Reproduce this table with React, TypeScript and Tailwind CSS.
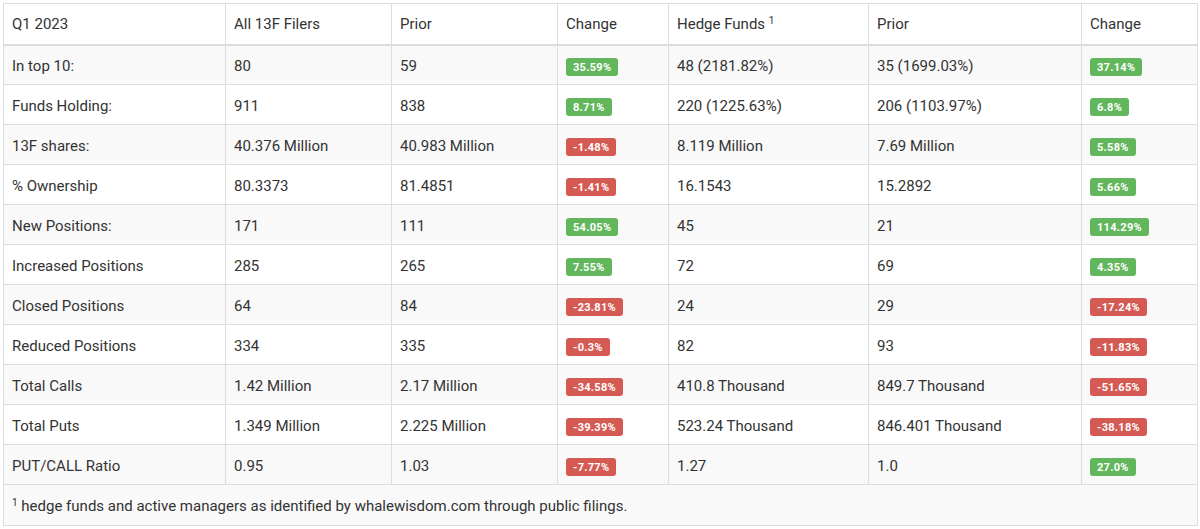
import React from "react";

type Row = { label: string; a: string; ap: string; ac: string; h: string; hp: string; hc: string };

const rows: Row[] = [
  { label: "In top 10:", a: "80", ap: "59", ac: "35.59%", h: "48 (2181.82%)", hp: "35 (1699.03%)", hc: "37.14%" },
  { label: "Funds Holding:", a: "911", ap: "838", ac: "8.71%", h: "220 (1225.63%)", hp: "206 (1103.97%)", hc: "6.8%" },
  { label: "13F shares:", a: "40.376 Million", ap: "40.983 Million", ac: "-1.48%", h: "8.119 Million", hp: "7.69 Million", hc: "5.58%" },
  { label: "% Ownership", a: "80.3373", ap: "81.4851", ac: "-1.41%", h: "16.1543", hp: "15.2892", hc: "5.66%" },
  { label: "New Positions:", a: "171", ap: "111", ac: "54.05%", h: "45", hp: "21", hc: "114.29%" },
  { label: "Increased Positions", a: "285", ap: "265", ac: "7.55%", h: "72", hp: "69", hc: "4.35%" },
  { label: "Closed Positions", a: "64", ap: "84", ac: "-23.81%", h: "24", hp: "29", hc: "-17.24%" },
  { label: "Reduced Positions", a: "334", ap: "335", ac: "-0.3%", h: "82", hp: "93", hc: "-11.83%" },
  { label: "Total Calls", a: "1.42 Million", ap: "2.17 Million", ac: "-34.58%", h: "410.8 Thousand", hp: "849.7 Thousand", hc: "-51.65%" },
  { label: "Total Puts", a: "1.349 Million", ap: "2.225 Million", ac: "-39.39%", h: "523.24 Thousand", hp: "846.401 Thousand", hc: "-38.18%" },
  { label: "PUT/CALL Ratio", a: "0.95", ap: "1.03", ac: "-7.77%", h: "1.27", hp: "1.0", hc: "27.0%" },
];

function Badge({ v }: { v: string }) {
  const neg = v.startsWith("-");
  return (
    <span
      className={
        "inline-block rounded-[3px] px-[7px] pt-[3px] pb-[2px] text-[11px] font-bold leading-[13px] text-white tracking-[0.3px] " +
        (neg ? "bg-[#d55a54]" : "bg-[#62b75c]")
      }
    >
      {v}
    </span>
  );
}

const td = "border border-[#dddddd] px-[8px] pt-[2px] align-middle";
const th = "border border-[#dddddd] border-b-2 px-[8px] align-middle text-left font-normal";

export default function App() {
  return (
    <div
      className="w-[1200px] h-[529px] bg-white pl-[3px] pt-[3px] text-[#333333]"
      style={{ fontFamily: "Roboto, 'Liberation Sans', sans-serif" }}
    >
      <table className="w-[1194px] table-fixed border-collapse text-[15px] leading-[22px]">
        <colgroup>
          <col className="w-[222px]" />
          <col className="w-[166px]" />
          <col className="w-[166px]" />
          <col className="w-[111px]" />
          <col className="w-[200px]" />
          <col className="w-[213px]" />
          <col className="w-[116px]" />
        </colgroup>
        <thead>
          <tr className="h-[41px]">
            <th className={th}>Q1 2023</th>
            <th className={th}>All 13F Filers</th>
            <th className={th}>Prior</th>
            <th className={th}>Change</th>
            <th className={th}>
              Hedge Funds <sup className="text-[10px]">1</sup>
            </th>
            <th className={th}>Prior</th>
            <th className={th}>Change</th>
          </tr>
        </thead>
        <tbody>
          {rows.map((r, i) => (
            <tr key={r.label} className={"h-[40px] " + (i % 2 === 0 ? "bg-[#f9f9f9]" : "bg-white")}>
              <td className={td}>{r.label}</td>
              <td className={td}>{r.a}</td>
              <td className={td}>{r.ap}</td>
              <td className={td}>
                <Badge v={r.ac} />
              </td>
              <td className={td}>{r.h}</td>
              <td className={td}>{r.hp}</td>
              <td className={td}>
                <Badge v={r.hc} />
              </td>
            </tr>
          ))}
          <tr className="h-[41px] bg-[#f9f9f9]">
            <td colSpan={7} className={td}>
              <sup className="text-[10px]">1</sup> hedge funds and active managers as identified by whalewisdom.com through public filings.
            </td>
          </tr>
        </tbody>
      </table>
    </div>
  );
}
